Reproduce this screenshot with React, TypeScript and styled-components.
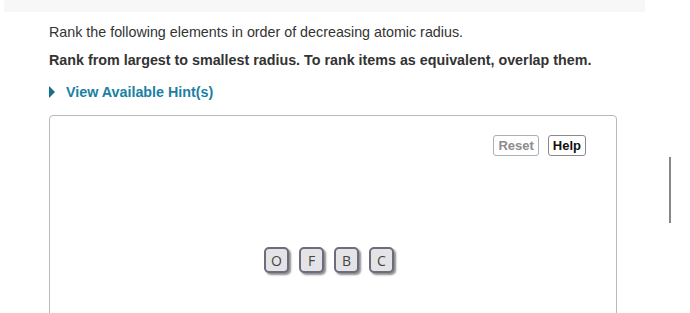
import React from "react";
import styled, { createGlobalStyle } from "styled-components";

const GlobalStyle = createGlobalStyle`
  html, body {
    margin: 0;
    padding: 0;
    background: #ffffff;
    overflow: hidden;
  }
  body {
    font-family: "Liberation Sans", Arial, sans-serif;
    color: #333333;
  }
`;

const Page = styled.div`
  display: flex;
  align-items: flex-start;
  padding-left: 4px;
`;

const Main = styled.div`
  width: 641px;
  display: flex;
  flex-direction: column;
`;

const TopBar = styled.div`
  height: 12px;
  background: #f7f7f7;
`;

const Content = styled.div`
  padding: 12px 0 0 45px;
  display: flex;
  flex-direction: column;
`;

const Prompt = styled.p`
  margin: 0;
  font-size: 14.3px;
  line-height: 16px;
  color: #333333;
  white-space: nowrap;
`;

const Instruction = styled.p`
  margin: 12px 0 0;
  font-size: 14.3px;
  line-height: 16px;
  font-weight: bold;
  color: #333333;
  white-space: nowrap;
`;

const HintToggle = styled.div`
  margin-top: 16px;
  display: flex;
  align-items: center;
  gap: 11px;
  font-size: 14.3px;
  line-height: 16px;
  font-weight: bold;
  color: #1a7fa3;
  cursor: pointer;
`;

const Caret = styled.span`
  width: 0;
  height: 0;
  border-top: 6px solid transparent;
  border-bottom: 6px solid transparent;
  border-left: 6px solid #1a6d8c;
`;

const Panel = styled.div`
  margin-top: 15px;
  width: 568px;
  height: 220px;
  box-sizing: border-box;
  border: 1px solid #b9b9b9;
  border-radius: 4px;
  padding: 19px 30px 0 0;
  display: flex;
  flex-direction: column;
`;

const Toolbar = styled.div`
  display: flex;
  justify-content: flex-end;
  gap: 9px;
`;

const ToolButton = styled.button<{ $disabled?: boolean }>`
  height: 21px;
  padding: 0 4px;
  background: #ffffff;
  border: 1px solid ${(p) => (p.$disabled ? "#a9b1b3" : "#8a8a8a")};
  border-radius: 3px;
  font-family: "Liberation Sans", Arial, sans-serif;
  font-size: 13px;
  font-weight: bold;
  color: ${(p) => (p.$disabled ? "#8c8c8c" : "#111111")};
`;

const TileRow = styled.div`
  margin-top: 91px;
  padding-left: 214px;
  display: flex;
  gap: 10px;
`;

const Tile = styled.div`
  width: 21px;
  height: 22px;
  background: #e4e4e6;
  border: 2px solid #6c6c7e;
  border-radius: 5px;
  box-shadow: 2px 2px 2px rgba(0, 0, 0, 0.45);
  display: flex;
  align-items: center;
  justify-content: center;
  font-family: "Open Sans", "DejaVu Sans", sans-serif;
  font-size: 14px;
  color: #444444;
`;

const SideMark = styled.div`
  margin: 157px 0 0 24px;
  width: 2px;
  height: 66px;
  background: #888888;
`;

const elements = ["O", "F", "B", "C"];

export default function App() {
  return (
    <>
      <GlobalStyle />
      <Page>
        <Main>
          <TopBar />
          <Content>
            <Prompt>Rank the following elements in order of decreasing atomic radius.</Prompt>
            <Instruction>
              Rank from largest to smallest radius. To rank items as equivalent, overlap them.
            </Instruction>
            <HintToggle>
              <Caret />
              View Available Hint(s)
            </HintToggle>
            <Panel>
              <Toolbar>
                <ToolButton $disabled>Reset</ToolButton>
                <ToolButton>Help</ToolButton>
              </Toolbar>
              <TileRow>
                {elements.map((el) => (
                  <Tile key={el}>{el}</Tile>
                ))}
              </TileRow>
            </Panel>
          </Content>
        </Main>
        <SideMark />
      </Page>
    </>
  );
}
